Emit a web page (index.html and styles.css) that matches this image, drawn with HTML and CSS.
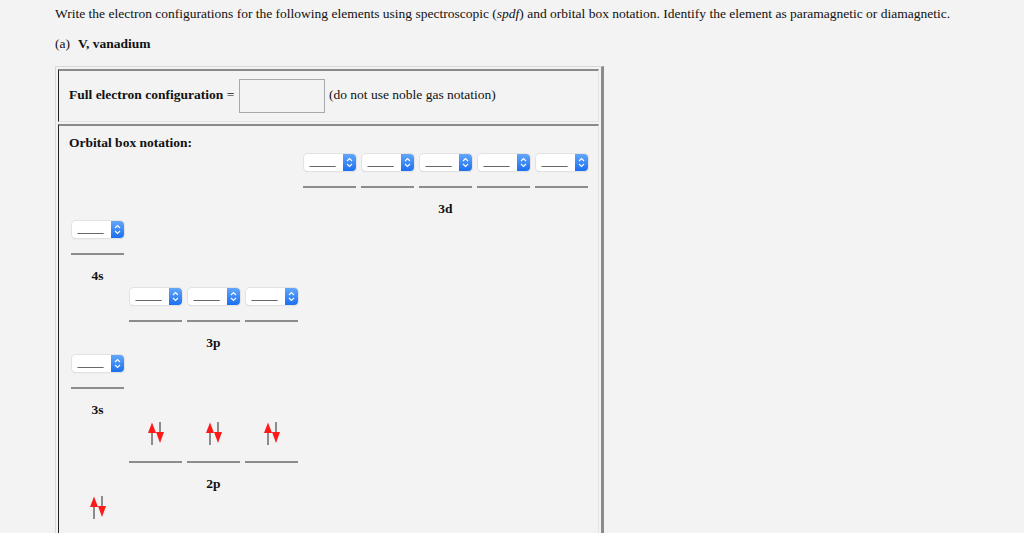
FILE: index.html
```html
<!DOCTYPE html>
<html lang="en">
  <head>
    <meta charset="UTF-8" />
    <title>Electron Configurations</title>
    <link rel="stylesheet" href="styles.css">
  </head>
  <body>
    <p class="prompt">
      Write the electron configurations for the following elements using
      spectroscopic (<i>spdf</i>) and orbital box notation. Identify the
      element as paramagnetic or diamagnetic.
    </p>

    <p class="part"><span class="part-letter">(a)</span><b>V, vanadium</b></p>

    <table class="answer-table">
      <tr>
        <td class="config-cell">
          <b>Full electron configuration</b> =
          <input type="text" class="config-input" />
          (do not use noble gas notation)
        </td>
      </tr>
      <tr>
        <td class="orbital-cell">
          <b class="orbital-title">Orbital box notation:</b>

          <div class="levels">
            <!-- 3d -->
            <div class="level col-d">
              <div class="orbitals">
                <div class="orbital"><div class="slot"><span class="picker"><span class="picker-value">____</span><span class="picker-btn"><svg width="7" height="11" viewBox="0 0 7 11"><path d="M1 4 L3.5 1.5 L6 4 M1 7 L3.5 9.5 L6 7" fill="none" stroke="#fff" stroke-width="1.1"/></svg></span></span></div><div class="line"></div></div>
                <div class="orbital"><div class="slot"><span class="picker"><span class="picker-value">____</span><span class="picker-btn"><svg width="7" height="11" viewBox="0 0 7 11"><path d="M1 4 L3.5 1.5 L6 4 M1 7 L3.5 9.5 L6 7" fill="none" stroke="#fff" stroke-width="1.1"/></svg></span></span></div><div class="line"></div></div>
                <div class="orbital"><div class="slot"><span class="picker"><span class="picker-value">____</span><span class="picker-btn"><svg width="7" height="11" viewBox="0 0 7 11"><path d="M1 4 L3.5 1.5 L6 4 M1 7 L3.5 9.5 L6 7" fill="none" stroke="#fff" stroke-width="1.1"/></svg></span></span></div><div class="line"></div></div>
                <div class="orbital"><div class="slot"><span class="picker"><span class="picker-value">____</span><span class="picker-btn"><svg width="7" height="11" viewBox="0 0 7 11"><path d="M1 4 L3.5 1.5 L6 4 M1 7 L3.5 9.5 L6 7" fill="none" stroke="#fff" stroke-width="1.1"/></svg></span></span></div><div class="line"></div></div>
                <div class="orbital"><div class="slot"><span class="picker"><span class="picker-value">____</span><span class="picker-btn"><svg width="7" height="11" viewBox="0 0 7 11"><path d="M1 4 L3.5 1.5 L6 4 M1 7 L3.5 9.5 L6 7" fill="none" stroke="#fff" stroke-width="1.1"/></svg></span></span></div><div class="line"></div></div>
              </div>
              <div class="level-label">3d</div>
            </div>

            <!-- 4s -->
            <div class="level col-s">
              <div class="orbitals">
                <div class="orbital"><div class="slot"><span class="picker"><span class="picker-value">____</span><span class="picker-btn"><svg width="7" height="11" viewBox="0 0 7 11"><path d="M1 4 L3.5 1.5 L6 4 M1 7 L3.5 9.5 L6 7" fill="none" stroke="#fff" stroke-width="1.1"/></svg></span></span></div><div class="line"></div></div>
              </div>
              <div class="level-label">4s</div>
            </div>

            <!-- 3p -->
            <div class="level col-p">
              <div class="orbitals">
                <div class="orbital"><div class="slot"><span class="picker"><span class="picker-value">____</span><span class="picker-btn"><svg width="7" height="11" viewBox="0 0 7 11"><path d="M1 4 L3.5 1.5 L6 4 M1 7 L3.5 9.5 L6 7" fill="none" stroke="#fff" stroke-width="1.1"/></svg></span></span></div><div class="line"></div></div>
                <div class="orbital"><div class="slot"><span class="picker"><span class="picker-value">____</span><span class="picker-btn"><svg width="7" height="11" viewBox="0 0 7 11"><path d="M1 4 L3.5 1.5 L6 4 M1 7 L3.5 9.5 L6 7" fill="none" stroke="#fff" stroke-width="1.1"/></svg></span></span></div><div class="line"></div></div>
                <div class="orbital"><div class="slot"><span class="picker"><span class="picker-value">____</span><span class="picker-btn"><svg width="7" height="11" viewBox="0 0 7 11"><path d="M1 4 L3.5 1.5 L6 4 M1 7 L3.5 9.5 L6 7" fill="none" stroke="#fff" stroke-width="1.1"/></svg></span></span></div><div class="line"></div></div>
              </div>
              <div class="level-label">3p</div>
            </div>

            <!-- 3s -->
            <div class="level col-s">
              <div class="orbitals">
                <div class="orbital"><div class="slot"><span class="picker"><span class="picker-value">____</span><span class="picker-btn"><svg width="7" height="11" viewBox="0 0 7 11"><path d="M1 4 L3.5 1.5 L6 4 M1 7 L3.5 9.5 L6 7" fill="none" stroke="#fff" stroke-width="1.1"/></svg></span></span></div><div class="line"></div></div>
              </div>
              <div class="level-label">3s</div>
            </div>

            <!-- 2p, filled -->
            <div class="level col-p">
              <div class="orbitals">
                <div class="orbital"><div class="slot slot-filled"><svg class="pair" width="20" height="24" viewBox="0 0 20 24"><line x1="6" y1="8" x2="6" y2="23" stroke="#8c8c8c" stroke-width="2"/><polygon points="2,11 6,0.5 10,11" fill="#ff1a1a"/><line x1="14" y1="0" x2="14" y2="12" stroke="#8c8c8c" stroke-width="2"/><polygon points="10,10 14,21 18,10" fill="#ff1a1a"/></svg></div><div class="line"></div></div>
                <div class="orbital"><div class="slot slot-filled"><svg class="pair" width="20" height="24" viewBox="0 0 20 24"><line x1="6" y1="8" x2="6" y2="23" stroke="#8c8c8c" stroke-width="2"/><polygon points="2,11 6,0.5 10,11" fill="#ff1a1a"/><line x1="14" y1="0" x2="14" y2="12" stroke="#8c8c8c" stroke-width="2"/><polygon points="10,10 14,21 18,10" fill="#ff1a1a"/></svg></div><div class="line"></div></div>
                <div class="orbital"><div class="slot slot-filled"><svg class="pair" width="20" height="24" viewBox="0 0 20 24"><line x1="6" y1="8" x2="6" y2="23" stroke="#8c8c8c" stroke-width="2"/><polygon points="2,11 6,0.5 10,11" fill="#ff1a1a"/><line x1="14" y1="0" x2="14" y2="12" stroke="#8c8c8c" stroke-width="2"/><polygon points="10,10 14,21 18,10" fill="#ff1a1a"/></svg></div><div class="line"></div></div>
              </div>
              <div class="level-label">2p</div>
            </div>

            <!-- 2s, filled -->
            <div class="level col-s">
              <div class="orbitals">
                <div class="orbital"><div class="slot slot-filled"><svg class="pair" width="20" height="24" viewBox="0 0 20 24"><line x1="6" y1="8" x2="6" y2="23" stroke="#8c8c8c" stroke-width="2"/><polygon points="2,11 6,0.5 10,11" fill="#ff1a1a"/><line x1="14" y1="0" x2="14" y2="12" stroke="#8c8c8c" stroke-width="2"/><polygon points="10,10 14,21 18,10" fill="#ff1a1a"/></svg></div><div class="line"></div></div>
              </div>
              <div class="level-label">2s</div>
            </div>
          </div>
        </td>
      </tr>
    </table>
  </body>
</html>
```

FILE: styles.css
```css
body {
  margin: 6px 0 0 55px;
  background: #f3f3f3;
  color: #111;
  font-family: "Liberation Serif", "DejaVu Serif", serif;
  font-size: 13.5px;
  line-height: 15px;
}
.answer-table,
.config-input {
  font-family: "Liberation Serif", "DejaVu Serif", serif;
  font-size: 13.5px;
}
.prompt {
  margin: 0;
}
.part {
  margin: 15px 0 0;
}
.part-letter {
  margin-right: 8px;
}
.answer-table {
  margin-top: 15px;
  width: 548px;
  border-collapse: separate;
  border-spacing: 2px;
  border-top: 1px solid #d8d8d8;
  border-left: 1px solid #d8d8d8;
  border-right: 3px solid #8a8a8a;
  border-bottom: 3px solid #8a8a8a;
}
.answer-table td {
  padding: 0 10px;
  border-top: 2px solid #8a8a8a;
  border-left: 1px solid #222;
  border-right: 1px solid #e4e4e4;
  border-bottom: 1px solid #e4e4e4;
  vertical-align: top;
}
.config-cell {
  height: 50px;
  vertical-align: middle !important;
}
.config-input {
  width: 84px;
  height: 32px;
  margin: 0 1px;
  padding: 0;
  border: 1px solid #a8a8a8;
  background: #f3f3f3;
  vertical-align: middle;
  box-sizing: border-box;
  width: 86px;
  height: 34px;
}
.orbital-cell {
  padding-top: 9px !important;
  height: 420px;
}
.orbital-title {
  display: block;
  line-height: 16px;
}
.levels {
  display: flex;
  flex-direction: column;
  align-items: flex-start;
  margin: 3px 0 0 2px;
}
/* each subshell sits in its own column of the staircase */
.col-s {
  margin-left: 0;
}
.col-p {
  margin-left: 58px;
}
.col-d {
  margin-left: 232px;
}
.level {
  padding-bottom: 4px;
}
.orbitals {
  display: flex;
  gap: 5px;
}
.orbital {
  width: 53px;
}
.slot {
  height: 17px;
  display: flex;
  justify-content: center;
}
.slot-filled {
  height: 24px;
}
.line {
  margin-top: 15px;
  height: 2px;
  background: #8c8c8c;
}
.level-label {
  margin-top: 13px;
  line-height: 16px;
  text-align: center;
  font-weight: bold;
}
.picker {
  display: flex;
  width: 52px;
  height: 17px;
  border-radius: 4px;
  background: #fff;
  box-shadow: 0 0 0 1px #e2e2e2, 0 1px 1px #c8c8c8;
  overflow: hidden;
}
.picker-value {
  flex: 1;
  padding-left: 6px;
  font-size: 13px;
  line-height: 14px;
  color: #222;
}
.picker-btn {
  width: 13px;
  display: flex;
  align-items: center;
  justify-content: center;
  background: linear-gradient(#63a7fb, #1b6ff0);
}
```
